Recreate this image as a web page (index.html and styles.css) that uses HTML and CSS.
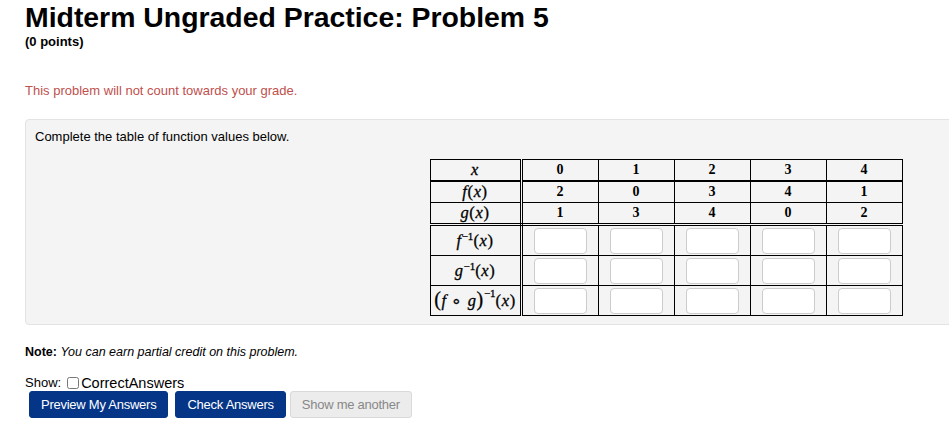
FILE: index.html
```html
<!DOCTYPE html>
<html>
<head>
<meta charset="utf-8">
<link rel="stylesheet" href="styles.css">
</head>
<body>
<div class="page">
  <h1 class="title">Midterm Ungraded Practice: Problem 5</h1>
  <div class="points">(0 points)</div>
  <p class="warning">This problem will not count towards your grade.</p>
  <div class="problem">
    <p class="prompt">Complete the table of function values below.</p>
    <table class="ftable">
      <tr class="head">
        <td class="lab"><i>x</i></td><td>0</td><td>1</td><td>2</td><td>3</td><td>4</td>
      </tr>
      <tr>
        <td class="lab"><i>f</i>(<i>x</i>)</td><td>2</td><td>0</td><td>3</td><td>4</td><td>1</td>
      </tr>
      <tr class="last">
        <td class="lab"><i>g</i>(<i>x</i>)</td><td>1</td><td>3</td><td>4</td><td>0</td><td>2</td>
      </tr>
      <tr class="ans first">
        <td class="lab"><i>f</i><sup>−1</sup>(<i>x</i>)</td>
        <td><input class="box"></td><td><input class="box"></td><td><input class="box"></td><td><input class="box"></td><td><input class="box"></td>
      </tr>
      <tr class="ans">
        <td class="lab"><i>g</i><sup>−1</sup>(<i>x</i>)</td>
        <td><input class="box"></td><td><input class="box"></td><td><input class="box"></td><td><input class="box"></td><td><input class="box"></td>
      </tr>
      <tr class="ans">
        <td class="lab"><span class="big">(</span><i>f</i> ∘ <i>g</i><span class="big">)</span><sup class="hi">−1</sup>(<i>x</i>)</td>
        <td><input class="box"></td><td><input class="box"></td><td><input class="box"></td><td><input class="box"></td><td><input class="box"></td>
      </tr>
    </table>
  </div>
  <p class="note"><b>Note:</b> <i>You can earn partial credit on this problem.</i></p>
  <div class="show">Show: <label class="chk"><input type="checkbox" class="cb"><span class="cblabel">CorrectAnswers</span></label></div>
  <div class="buttons">
    <button class="btn primary b1">Preview My Answers</button>
    <button class="btn primary b2">Check Answers</button>
    <button class="btn disabled">Show me another</button>
  </div>
</div>
</body>
</html>
```

FILE: styles.css
```css
html, body {
  margin: 0;
  padding: 0;
  overflow: hidden;
  background: #fff;
}
body {
  font-family: "Liberation Sans", Arial, sans-serif;
  color: #000;
  font-size: 13px;
}
.page {
  padding-left: 25px;
  width: 1400px;
}
.title {
  font-size: 28.4px;
  font-weight: bold;
  margin: 0;
  padding-top: 1px;
  line-height: 32px;
}
.points {
  font-size: 13px;
  font-weight: bold;
  line-height: 15px;
  margin-top: 1px;
}
.warning {
  color: #c0504d;
  margin: 34px 0 0 0;
  line-height: 15px;
}
.problem {
  margin-top: 21px;
  width: 1273px;
  background: #f4f4f4;
  border: 1px solid #e3e3e3;
  border-radius: 4px;
  padding: 9px 0 8px 9px;
  box-sizing: border-box;
}
.prompt {
  margin: 0;
  line-height: 15px;
}
.ftable {
  margin: 15px auto 0 auto;
  border-collapse: collapse;
  font-family: "Liberation Serif", "Times New Roman", serif;
  font-size: 14px;
}
.ftable td {
  border: 1px solid #000;
  text-align: center;
  width: 75px;
  height: 20px;
  padding: 0;
  font-weight: bold;
}
.ftable td.lab {
  width: 89px;
  border-right: 3px double #000;
  font-weight: normal;
  font-size: 16.5px;
  letter-spacing: 0.6px;
  -webkit-text-stroke: 0.3px #000;
}
.ftable tr.head td {
  border-bottom: 2px solid #000;
}
.ftable tr.last td {
  border-bottom: 3px double #000;
}
.ftable tr.ans td {
  height: 29px;
}
.ftable sup {
  font-size: 11px;
  vertical-align: 6px;
  line-height: 0;
  letter-spacing: 0;
}
.ftable sup.hi {
  vertical-align: 9px;
}
.big {
  font-size: 20px;
  line-height: 0;
}
.box {
  width: 53px;
  height: 26px;
  box-sizing: border-box;
  border: 1px solid #ccc;
  border-radius: 4px;
  background: #fff;
  display: block;
  margin: 0 auto;
  padding: 0;
}
.note {
  margin: 20px 0 0 0;
  line-height: 15px;
  font-size: 12.5px;
}
.show {
  margin-top: 15px;
  line-height: 16px;
  display: flex;
  align-items: center;
}
.chk {
  display: flex;
  align-items: center;
  margin-left: 6px;
}
.cb {
  margin: 0 2px 0 0;
  width: 12px;
  height: 12px;
}
.cblabel {
  font-size: 14.5px;
}
.buttons {
  display: flex;
  padding-left: 4px;
}
.btn {
  height: 27px;
  border-radius: 3px;
  font-family: "Liberation Sans", Arial, sans-serif;
  font-size: 13px;
  letter-spacing: -0.25px;
  padding: 0 11px;
  border: 1px solid;
}
.b1 {
  margin-right: 7px;
}
.b2 {
  margin-right: 4px;
}
.primary {
  background: #053587;
  border-color: #053587;
  color: #fff;
}
.disabled {
  background: #ececec;
  border-color: #d9d9d9;
  color: #888;
}
```
